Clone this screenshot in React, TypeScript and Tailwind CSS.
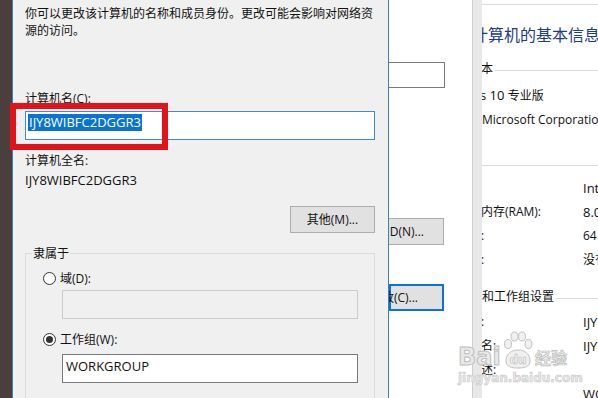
import type { ReactNode } from "react"

const Radio = ({ checked, label }: { checked?: boolean; label: string }) => (
  <div className="ml-[17px] flex items-center gap-[4px] leading-[17px]">
    <div className="flex h-[13px] w-[13px] items-center justify-center rounded-full border border-[#333333] bg-white">
      {checked && <div className="h-[7px] w-[7px] rounded-full bg-[#333333]" />}
    </div>
    <span>{label}</span>
  </div>
)

// text whose start lies left of the column: pre overflows to the left and gets clipped
const Cut = ({ w, pre, children, className = "" }: { w: number; pre: string; children?: ReactNode; className?: string }) => (
  <div className={"flex items-center whitespace-nowrap " + className}>
    <div className="flex shrink-0 justify-end" style={{ width: w }}>
      <span className="shrink-0">{pre}</span>
    </div>
    {children}
  </div>
)

const InfoRow = ({ label, value, latin }: { label: string; value: string; latin?: boolean }) => (
  <div className="ml-[-49px] flex h-[24px] items-center whitespace-nowrap leading-[24px]">
    <div className="w-[150px] shrink-0">{label}</div>
    <div className={latin ? "text-[13px]" : ""}>{value}</div>
  </div>
)

export default function App() {
  return (
    <div className="relative flex h-[398px] w-[598px] overflow-hidden bg-white font-[family-name:'Open_Sans','Noto_Sans_CJK_SC',sans-serif] text-[12px] text-[#111111]">
      <div className="w-[12px] shrink-0 bg-[#4b3f3d]" />

      {/* 计算机名/域更改 dialog */}
      <div className="w-[377px] shrink-0 border-x border-[#3a80c2] bg-[#f0f0f0] pl-[12px] pr-[13px]">
        <p className="pt-[5px] leading-[17px]">
          你可以更改该计算机的名称和成员身份。更改可能会影响对网络资
          <br />
          源的访问。
        </p>

        <div className="mt-[51px] leading-[17px]">计算机名(C):</div>
        <div className="mt-[4px] flex h-[29px] items-start border border-[#3d8bd0] bg-white pl-[2px] pt-[2px]">
          <span className="bg-[#0a74d4] px-[1px] text-[13px] leading-[17px] text-white">IJY8WIBFC2DGGR3</span>
        </div>

        <div className="mt-[12px] leading-[17px]">计算机全名:</div>
        <div className="mt-[3px] text-[13px] leading-[17px]">IJY8WIBFC2DGGR3</div>

        <div className="mt-[17px] flex justify-end">
          <div className="flex h-[27px] w-[85px] items-center justify-center border border-[#adadad] bg-[#e1e1e1]">其他(M)...</div>
        </div>

        <fieldset className="mt-[12px] border border-[#dcdcdc] pb-[40px]">
          <legend className="ml-[6px] px-[1px] leading-[17px]">隶属于</legend>
          <div className="mt-[8px]">
            <Radio label="域(D):" />
          </div>
          <div className="ml-[36px] mt-[3px] h-[29px] w-[296px] border border-[#cccccc] bg-[#f0f0f0]" />
          <div className="mt-[12px]">
            <Radio checked label="工作组(W):" />
          </div>
          <div className="ml-[36px] mt-[6px] h-[29px] w-[296px] border border-[#7a7a7a] bg-white pl-[3px] pt-[3px] text-[13px] leading-[17px]">
            WORKGROUP
          </div>
        </fieldset>
      </div>

      {/* 系统属性 behind */}
      <div className="w-[83px] shrink-0 overflow-hidden bg-white">
        <div className="mt-[62px] h-[26px] w-[56px] border-y border-r border-[#7a7a7a]" />
        <div className="mt-[130px] flex h-[27px] w-[55px] items-center justify-end whitespace-nowrap border-y border-r border-[#adadad] bg-[#e1e1e1] pr-[19px]">
          <span className="shrink-0">网络 ID(N)...</span>
        </div>
        <div className="mt-[39px] flex h-[27px] w-[55px] items-center justify-end whitespace-nowrap border-2 border-[#0a74d4] bg-[#e1e1e1] pr-[24px]">
          <span className="shrink-0">更改(C)...</span>
        </div>
      </div>

      <div className="w-[10px] shrink-0 border-l border-[#cfcfcf] bg-[#e8e8e8]" />

      {/* 系统 window */}
      <div className="w-[116px] shrink-0 overflow-hidden bg-white pt-[4px]">
        <div className="border-t border-[#dadada]" />
        <Cut w={6} pre="查看有关计" className="mt-[19px] text-[16px] leading-[22px] text-[#1e3c8c]">
          <span>算机的基本信息</span>
        </Cut>
        <Cut w={11} pre="Windows 版本" className="mt-[14px] leading-[17px]">
          <div className="ml-[2px] mt-[3px] flex-1 border-t border-[#d9d9d9]" />
        </Cut>
        <Cut w={0} pre="Window" className="mt-[10px] leading-[17px]">
          <span className="ml-[-2px] text-[13px]">s 10 <span className="text-[12px]">专业版</span></span>
        </Cut>
        <Cut w={0} pre="© 2018 " className="mt-[7px] text-[12px] leading-[17px]">
          <span>Microsoft Corporation。保留所有权利。</span>
        </Cut>
        <div className="mt-[37px] border-t border-[#d9d9d9]" />
        <div className="mt-[10px]">
          <InfoRow label="处理器:" value="Intel(R) Core(TM) i5-7500 CPU" latin />
          <InfoRow label="已安装的内存(RAM):" value="8.00 GB" latin />
          <InfoRow label="系统类型:" value="64 位操作系统，基于 x64 的处理器" />
          <InfoRow label="笔和触控:" value="没有可用于此显示器的笔或触控输入" />
        </div>
        <Cut w={12} pre="计算机名、域和" className="mt-[16px] leading-[17px]">
          <span>工作组设置</span>
          <div className="ml-[2px] mt-[3px] min-w-[40px] flex-1 border-t border-[#d9d9d9]" />
        </Cut>
        <div className="mt-[5px]">
          <InfoRow label="计算机名:" value="IJY8WIBFC2DGGR3" latin />
          <InfoRow label="计算机全名:" value="IJY8WIBFC2DGGR3" latin />
          <InfoRow label="计算机描述:" value="" />
          <InfoRow label="工作组:" value="WORKGROUP" latin />
        </div>
      </div>

      {/* red highlight */}
      <div className="absolute left-[10px] top-[103px] h-[47px] w-[158px] border-[6px] border-[#e2141b]" />

      {/* watermark */}
      <div className="pointer-events-none absolute left-[457px] top-[331px] z-10 h-[56px] w-[112px] text-[#e9e9e9]">
        <span className="absolute left-[1px] top-[13px] font-[family-name:'DejaVu_Sans',sans-serif] text-[24px] font-bold leading-[26px] [-webkit-text-stroke:1px_#bdbdbd]">
          Bai
        </span>
        <svg width="32" height="38" viewBox="0 0 32 38" className="absolute left-[45px] top-0">
          <g fill="#f0f0f0" stroke="#c2c2c2" strokeWidth="1">
            <ellipse cx="6" cy="13" rx="3.5" ry="4.5" />
            <ellipse cx="12.5" cy="5.5" rx="3.5" ry="4.5" />
            <ellipse cx="20" cy="5.5" rx="3.5" ry="4.5" />
            <ellipse cx="26.5" cy="13" rx="3.5" ry="4.5" />
            <path d="M4 30 C4 22 10 19 16 19 C22 19 28 22 28 30 C28 36 22 37 16 37 C10 37 4 36 4 30 Z" />
          </g>
          <text x="16" y="33" textAnchor="middle" fontSize="12" fontWeight="bold" fill="#f8f8f8" stroke="#bdbdbd" strokeWidth="0.7" fontFamily="DejaVu Sans">
            du
          </text>
        </svg>
        <span className="absolute left-[78px] top-[17px] whitespace-nowrap text-[16px] font-bold leading-[20px] [-webkit-text-stroke:0.7px_#bdbdbd]">
          经验
        </span>
        <span className="absolute left-[1px] top-[40px] whitespace-nowrap font-[family-name:'DejaVu_Sans',sans-serif] text-[12px] font-bold leading-[14px] [-webkit-text-stroke:0.6px_#c8c8c8]">
          jingyan.baidu.com
        </span>
      </div>
    </div>
  )
}
